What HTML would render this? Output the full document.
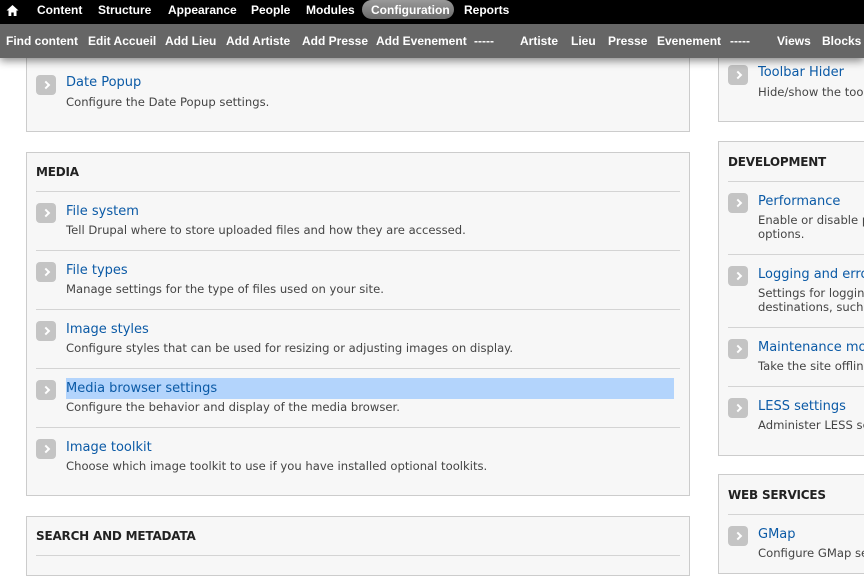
<!DOCTYPE html>
<html><head><style>
*{margin:0;padding:0;box-sizing:border-box}
body{width:864px;height:561px;overflow:hidden;background:#fff;font-family:"DejaVu Sans","Liberation Sans",sans-serif;position:relative}
.a{position:absolute;white-space:nowrap}
.bar1{position:absolute;left:0;top:0;width:864px;height:24px;background:#000}
.bar2{position:absolute;left:0;top:24px;width:864px;height:34px;background:#666;box-shadow:0 3px 8px rgba(0,0,0,.45)}
.n{position:absolute;color:#fff;font-weight:bold;font-size:12px;font-family:"Liberation Sans",sans-serif;white-space:nowrap}
.panel{position:absolute;background:#f7f7f7;border:1px solid #ccc}
.h{position:absolute;font-weight:bold;font-size:12px;color:#222;letter-spacing:-0.2px}
.hr{position:absolute;height:1px;background:#d4d4d4}
.t{position:absolute;color:#0b5aa6;font-size:13px;white-space:nowrap}
.d{position:absolute;color:#444;font-size:11.6px;white-space:nowrap;line-height:14px}
.ic{position:absolute;width:20px;height:20px;border-radius:4px;background:#c4c4c4}
.ic:after{content:"";position:absolute;left:7px;top:7px;width:4px;height:4px;border-right:2px solid #fff;border-top:2px solid #fff;transform:rotate(45deg)}
</style></head><body>
<div class="panel" style="left:26px;top:40px;width:664px;height:92px"></div>
<div class="panel" style="left:718px;top:40px;width:160px;height:82px"></div>
<div class="ic" style="left:36px;top:75px"></div>
<div class="t" style="left:66px;top:75px">Date Popup</div>
<div class="d" style="left:66px;top:95px">Configure the Date Popup settings.</div>
<div class="ic" style="left:728px;top:65px"></div>
<div class="t" style="left:758px;top:65px">Toolbar Hider</div>
<div class="d" style="left:758px;top:85px">Hide/show the too</div>

<div class="panel" style="left:26px;top:152px;width:664px;height:344px"></div>
<div class="h" style="left:36px;top:165px">MEDIA</div>
<div class="hr" style="left:36px;top:191px;width:644px"></div>
<div class="ic" style="left:36px;top:203px"></div>
<div class="t" style="left:66px;top:204px">File system</div>
<div class="d" style="left:66px;top:223px">Tell Drupal where to store uploaded files and how they are accessed.</div>
<div class="hr" style="left:36px;top:250px;width:644px"></div>
<div class="ic" style="left:36px;top:262px"></div>
<div class="t" style="left:66px;top:263px">File types</div>
<div class="d" style="left:66px;top:282px">Manage settings for the type of files used on your site.</div>
<div class="hr" style="left:36px;top:309px;width:644px"></div>
<div class="ic" style="left:36px;top:321px"></div>
<div class="t" style="left:66px;top:322px">Image styles</div>
<div class="d" style="left:66px;top:341px">Configure styles that can be used for resizing or adjusting images on display.</div>
<div class="hr" style="left:36px;top:368px;width:644px"></div>
<div style="position:absolute;left:66px;top:378px;width:608px;height:21px;background:#b3d4fc"></div>
<div class="ic" style="left:36px;top:380px"></div>
<div class="t" style="left:66px;top:381px">Media browser settings</div>
<div class="d" style="left:66px;top:400px">Configure the behavior and display of the media browser.</div>
<div class="hr" style="left:36px;top:427px;width:644px"></div>
<div class="ic" style="left:36px;top:439px"></div>
<div class="t" style="left:66px;top:440px">Image toolkit</div>
<div class="d" style="left:66px;top:459px">Choose which image toolkit to use if you have installed optional toolkits.</div>

<div class="panel" style="left:26px;top:516px;width:664px;height:60px"></div>
<div class="h" style="left:36px;top:529px">SEARCH AND METADATA</div>
<div class="hr" style="left:36px;top:555px;width:644px"></div>

<div class="panel" style="left:718px;top:141px;width:160px;height:315px"></div>
<div class="h" style="left:728px;top:155px">DEVELOPMENT</div>
<div class="hr" style="left:728px;top:181px;width:140px"></div>
<div class="ic" style="left:728px;top:193px"></div>
<div class="t" style="left:758px;top:194px">Performance</div>
<div class="d" style="left:758px;top:213px">Enable or disable p<br>options.</div>
<div class="hr" style="left:728px;top:254px;width:140px"></div>
<div class="ic" style="left:728px;top:266px"></div>
<div class="t" style="left:758px;top:267px">Logging and erro</div>
<div class="d" style="left:758px;top:286px">Settings for loggin<br>destinations, such</div>
<div class="hr" style="left:728px;top:327px;width:140px"></div>
<div class="ic" style="left:728px;top:339px"></div>
<div class="t" style="left:758px;top:340px">Maintenance mo</div>
<div class="d" style="left:758px;top:359px">Take the site offlin</div>
<div class="hr" style="left:728px;top:386px;width:140px"></div>
<div class="ic" style="left:728px;top:398px"></div>
<div class="t" style="left:758px;top:399px">LESS settings</div>
<div class="d" style="left:758px;top:418px">Administer LESS se</div>

<div class="panel" style="left:718px;top:474px;width:160px;height:100px"></div>
<div class="h" style="left:728px;top:488px">WEB SERVICES</div>
<div class="hr" style="left:728px;top:514px;width:140px"></div>
<div class="ic" style="left:728px;top:526px"></div>
<div class="t" style="left:758px;top:527px">GMap</div>
<div class="d" style="left:758px;top:546px">Configure GMap se</div>

<div class="bar2"></div>
<div class="bar1"></div>
<svg class="a" style="left:6px;top:4px" width="13" height="13" viewBox="0 0 13 13"><path d="M6.5 1 L0.5 6.5 H2.5 V12 H5.3 V8.5 H7.7 V12 H10.5 V6.5 H12.5 Z" fill="#fff"/></svg>
<div style="position:absolute;left:362px;top:0;width:92px;height:19px;border-radius:10px;background:linear-gradient(#999,#6a6a6a)"></div>
<div class="n" style="left:37px;top:3px">Content</div>
<div class="n" style="left:98px;top:3px">Structure</div>
<div class="n" style="left:168px;top:3px">Appearance</div>
<div class="n" style="left:251px;top:3px">People</div>
<div class="n" style="left:306px;top:3px">Modules</div>
<div class="n" style="left:371px;top:3px">Configuration</div>
<div class="n" style="left:464px;top:3px">Reports</div>
<div class="n" style="left:6px;top:34px">Find content</div>
<div class="n" style="left:88px;top:34px">Edit Accueil</div>
<div class="n" style="left:165px;top:34px">Add Lieu</div>
<div class="n" style="left:226px;top:34px">Add Artiste</div>
<div class="n" style="left:302px;top:34px">Add Presse</div>
<div class="n" style="left:376px;top:34px">Add Evenement</div>
<div class="n" style="left:474px;top:34px">-----</div>
<div class="n" style="left:520px;top:34px">Artiste</div>
<div class="n" style="left:571px;top:34px">Lieu</div>
<div class="n" style="left:608px;top:34px">Presse</div>
<div class="n" style="left:657px;top:34px">Evenement</div>
<div class="n" style="left:730px;top:34px">-----</div>
<div class="n" style="left:777px;top:34px">Views</div>
<div class="n" style="left:822px;top:34px">Blocks</div>
</body></html>
